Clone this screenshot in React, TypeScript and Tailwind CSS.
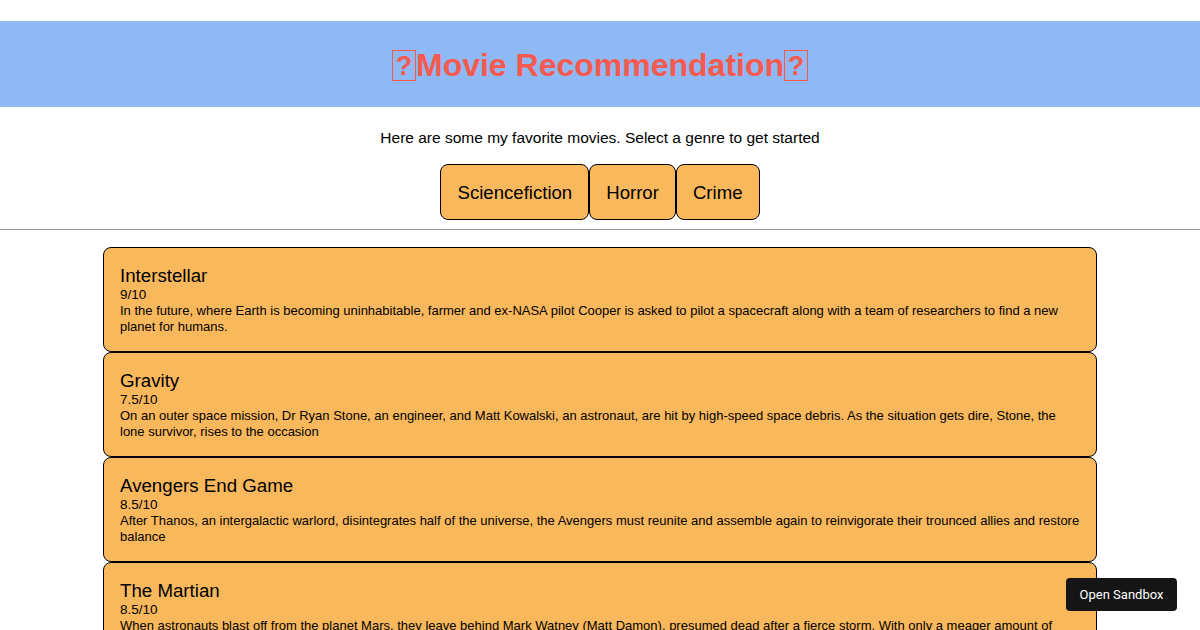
import React from "react";

type Movie = { name: string; rating: string; desc: string };

const movies: Movie[] = [
  {
    name: "Interstellar",
    rating: "9/10",
    desc: "In the future, where Earth is becoming uninhabitable, farmer and ex-NASA pilot Cooper is asked to pilot a spacecraft along with a team of researchers to find a new planet for humans.",
  },
  {
    name: "Gravity",
    rating: "7.5/10",
    desc: "On an outer space mission, Dr Ryan Stone, an engineer, and Matt Kowalski, an astronaut, are hit by high-speed space debris. As the situation gets dire, Stone, the lone survivor, rises to the occasion",
  },
  {
    name: "Avengers End Game",
    rating: "8.5/10",
    desc: "After Thanos, an intergalactic warlord, disintegrates half of the universe, the Avengers must reunite and assemble again to reinvigorate their trounced allies and restore balance",
  },
  {
    name: "The Martian",
    rating: "8.5/10",
    desc: "When astronauts blast off from the planet Mars, they leave behind Mark Watney (Matt Damon), presumed dead after a fierce storm. With only a meager amount of supplies, the stranded visitor must utilize his wits and spirit to find a way to survive on the hostile planet.",
  },
];

const genres = ["Sciencefiction", "Horror", "Crime"];

// Placeholder box for the heading's emoji glyph
function Tofu() {
  return (
    <span className="inline-block h-[31px] w-[24px] overflow-hidden border border-[#f65a4e] text-center align-[-5px] text-[27px] leading-[30px]">
      ?
    </span>
  );
}

export default function App() {
  return (
    <div
      className="relative min-h-[630px] bg-white text-black"
      style={{ fontFamily: '"Liberation Sans", Arial, sans-serif' }}
    >
      <div className="h-[21px]" />
      <header className="flex h-[86px] items-center justify-center bg-[#8fb9f4]">
        <h1 className="pt-[2px] text-[32px] font-bold leading-[32px] text-[#f65a4e]">
          <Tofu />
          Movie Recommendation
          <Tofu />
        </h1>
      </header>

      <p className="mt-[22px] text-center text-[15.5px] leading-[18px]">
        Here are some my favorite movies. Select a genre to get started
      </p>

      <div className="mt-[17px] flex justify-center">
        {genres.map((g) => (
          <button
            key={g}
            className="h-[56px] rounded-[8px] border border-black bg-[#fab85c] px-4 text-[18.6px] leading-[23px] text-black"
          >
            {g}
          </button>
        ))}
      </div>

      <div className="mt-[9px] border-t border-[#9a9a9a]" />

      <div className="mt-[17px] flex flex-col items-center">
        {movies.map((m) => (
          <div
            key={m.name}
            className="w-[994px] rounded-[8px] border border-black bg-[#fab85c] p-4"
          >
            <div className="text-[18.7px] leading-[23px]">{m.name}</div>
            <div className="text-[13.5px] leading-[16px]">{m.rating}</div>
            <div className="text-[13px] leading-[16px]">{m.desc}</div>
          </div>
        ))}
      </div>

      <div
        className="absolute left-[1066px] top-[578px] flex h-[33px] w-[111px] items-center justify-center rounded-[4px] bg-[#151515] text-[13px] text-white"
        style={{ fontFamily: 'Roboto, "Liberation Sans", sans-serif' }}
      >
        Open Sandbox
      </div>
    </div>
  );
}
